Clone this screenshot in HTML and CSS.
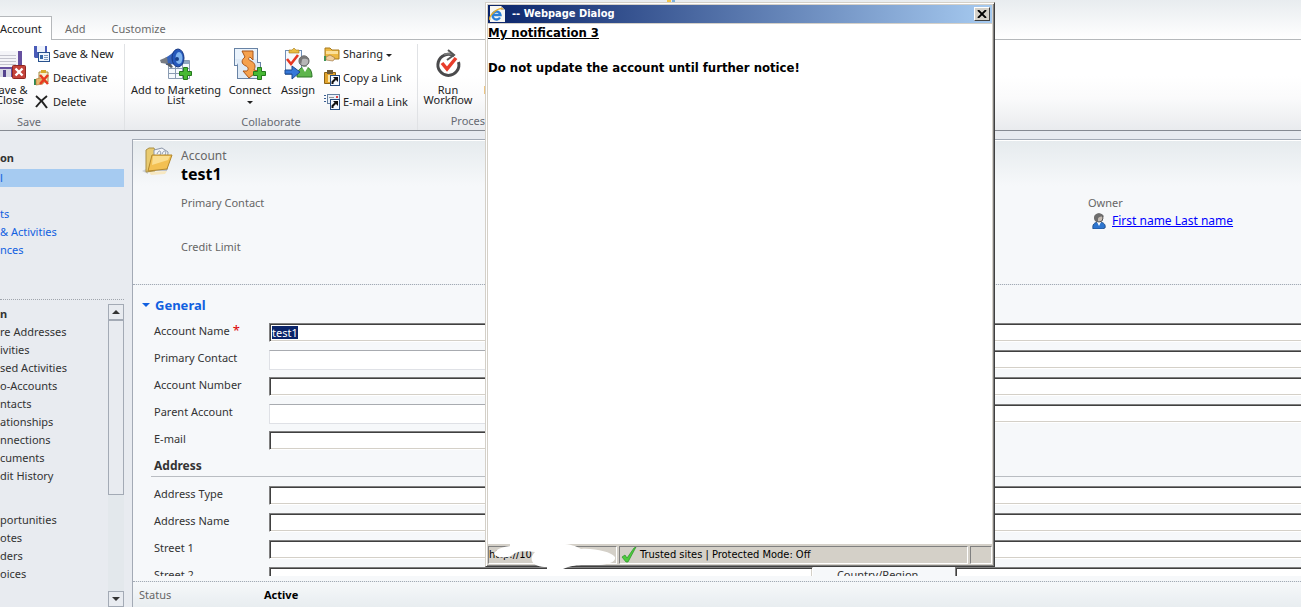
FILE: index.html
```html
<!DOCTYPE html>
<html lang="en">
<head>
  <meta charset="UTF-8">
  <title>Account: test1</title>
  <meta name="viewport" content="width=device-width,initial-scale=1.0">
  <link rel="stylesheet" href="styles.css">
</head>
<body>
  <header class="top">
    <svg class="logo" width="9" height="3"><path d="M0 0h4v3H0z" fill="#f3c64b"/><path d="M5 0h3v2H5z" fill="#7fb2dd"/></svg>
    <nav class="tabs">
      <a href="#" class="tab active">Account</a>
      <a href="#" class="tab">Add</a>
      <a href="#" class="tab">Customize</a>
    </nav>
  </header>

  <div class="ribbon">
    <div class="group save">
      <div class="tools">
        <button class="big">
          <svg width="32" height="32" viewBox="0 0 32 32">
            <path d="M0 3h28v26H0z" fill="#66509f"/>
            <path d="M3 3h21v16H3z" fill="#f4f4f8"/>
            <path d="M4 7.500h18M4 10.500h18M4 13.500h18M4 16.500h18" stroke="#c4c4ce"/>
            <path d="M5 21h12v8H5z" fill="#d8d8e4"/><path d="M9 22h3v7H9z" fill="#55438d"/>
            <rect x="18.500" y="17.500" width="13" height="13" rx="1" fill="#c5433b" stroke="#8f2722"/>
            <path d="M21.500 20.500l7 7M28.500 20.500l-7 7" stroke="#fff" stroke-width="2.400"/>
          </svg>
          <span>Save &amp; Close</span>
        </button>
        <div class="smalls">
          <button class="small">
            <svg width="16" height="16" viewBox="0 0 16 16">
              <path d="M0 0h13v12H1L0 11z" fill="#4a5cb8"/><path d="M3 0h8v6H3z" fill="#eef3fc"/>
              <rect x="4.500" y="6.500" width="11" height="9" fill="#eff6fd" stroke="#28518d"/>
              <path d="M6 9h3v4H6z" fill="#3566a5"/><path d="M10 9.500h4M10 11.500h4M10 13.500h4" stroke="#7f99bd"/>
            </svg>
            Save &amp; New
          </button>
          <button class="small">
            <svg width="16" height="16" viewBox="0 0 16 16">
              <path d="M5 2h9v10H5z" fill="#f7efcf" stroke="#a3893d"/><path d="M7 0h5v3H7z" fill="#d9a92b"/>
              <path d="M0 9h2v6H0z" fill="#2b8b55"/><path d="M2 9l4-1 4 2-1 4-7 1z" fill="#e9b56d" stroke="#a8722d" stroke-width=".6"/>
              <path d="M6 5l8 9M14 5l-8 9" stroke="#e83a20" stroke-width="2.600"/>
            </svg>
            Deactivate
          </button>
          <button class="small">
            <svg width="16" height="16" viewBox="0 0 16 16">
              <path d="M2 2c4 3 7 6 11 12" fill="none" stroke="#222" stroke-width="2"/><path d="M13 2C9 5 5 9 2 13" fill="none" stroke="#222" stroke-width="2"/>
            </svg>
            Delete
          </button>
        </div>
      </div>
      <div class="caption">Save</div>
    </div>

    <div class="group collaborate">
      <div class="tools">
        <button class="big wide">
          <svg width="32" height="32" viewBox="0 0 32 32">
            <path d="M8.500 12.500h21v18h-21z" fill="#f5f9fd" stroke="#8a9bb2"/>
            <path d="M9 13h20v3H9z" fill="#8fa5c2"/>
            <path d="M8 20.500h22M8 25.500h22M15.500 12v18M22.500 12v18" stroke="#8a9bb2"/>
            <path d="M5 10C9 8 13 5 16 1l5 17c-5-2-10-2-15-1z" fill="#3563bd"/>
            <path d="M0 12l7-3 1 7-7-1z" fill="#777b82"/><path d="M6 16l5 4 2-1-3-4z" fill="#555a62"/>
            <ellipse cx="18" cy="10" rx="6" ry="9" fill="#2457bb" stroke="#18387f"/>
            <ellipse cx="19" cy="10" rx="3.500" ry="6" fill="#80b4ef"/><circle cx="17" cy="11" r="2" fill="#183f8a"/>
            <path d="M23.500 19.500h4v4h4v4h-4v4h-4v-4h-4v-4h4z" fill="#48b934" stroke="#24781d"/>
          </svg>
          <span>Add to Marketing List</span>
        </button>
        <button class="big connect">
          <svg width="32" height="32" viewBox="0 0 32 32">
            <rect x=".5" y=".5" width="23" height="17" fill="#eaf3fc" stroke="#6883a5"/>
            <rect x="3.500" y="14.500" width="23" height="16" fill="#dfeaf6" stroke="#6883a5"/>
            <path d="M1 11h22v6H4z" fill="#dfeaf6"/>
            <path d="M8 3h11v9l-3-3c-2 1-2 3 1 4 4 2 5 5 3 9l4 1-9 7-6-7h4c2-2 1-4-1-5-5-2-5-6-1-9z" fill="#f5a14e" stroke="#a95518"/>
            <path d="M23.500 19.500h4v4h4v4h-4v4h-4v-4h-4v-4h4z" fill="#48b934" stroke="#24781d"/>
          </svg>
          <span>Connect</span>
          <i class="arrow"></i>
        </button>
        <button class="big assign">
          <svg width="32" height="32" viewBox="0 0 32 32">
            <rect x="3.500" y="2.500" width="16" height="24" fill="#f6f9fd" stroke="#6f8eb5"/>
            <path d="M7 2h3l2-2 2 2h3v3H7z" fill="#e9bd43" stroke="#a47a19" stroke-width=".6"/>
            <path d="M5 11l4 5 7-9" fill="none" stroke="#e63723" stroke-width="2.600"/>
            <path d="M15 29c0-6 3-10 8-10s7 4 7 10z" fill="#5eb54c" stroke="#2c7526"/><path d="M20 19l3 5 3-5z" fill="#fff"/>
            <circle cx="22" cy="13" r="5" fill="#b7b7b7" stroke="#555"/><path d="M17 12c1-6 9-6 10 0-3-1-6-2-7 0l-1 5z" fill="#777"/>
            <path d="M3 22h7v-4l8 6-8 7v-5H3z" fill="#3478d8" stroke="#1c498e"/>
          </svg>
          <span>Assign</span>
        </button>
        <div class="smalls">
          <button class="small">
            <svg width="16" height="16" viewBox="0 0 16 16">
              <path d="M1 2h5l2 2h7v9H1z" fill="#edb842" stroke="#a77b1f"/><path d="M2 5h12v3H2z" fill="#fbe09a"/>
              <path d="M0 10h2v5H0z" fill="#3a9556"/><path d="M2 11l4-2 5 3-2 3-7-1z" fill="#f0ce9c" stroke="#96703c" stroke-width=".6"/>
            </svg>
            Sharing <i class="arrow"></i>
          </button>
          <button class="small">
            <svg width="16" height="16" viewBox="0 0 16 16">
              <path d="M.5 2.500h11v11H.5z" fill="#e3a52e" stroke="#8b6316"/><path d="M3 0h6v4H3z" fill="#6c5a3a"/><path d="M4 5h6v7H4z" fill="#fbe6ab"/>
              <rect x="6.500" y="5.500" width="9" height="10" fill="#f4f9ff" stroke="#274d81"/>
              <path d="M8.500 14v-2l3-3" fill="none" stroke="#111" stroke-width="2"/><path d="M9 7h5v5z" fill="#111"/>
            </svg>
            Copy a Link
          </button>
          <button class="small">
            <svg width="16" height="16" viewBox="0 0 16 16">
              <path d="M0 1.500h2M0 4.500h2M0 7.500h2" stroke="#365d94"/>
              <rect x="3.500" y=".5" width="12" height="9" fill="#eaf1fa" stroke="#67809f"/><path d="M12 2h2v2h-2z" fill="#d44"/><path d="M5 3.500h5" stroke="#999"/>
              <rect x="6.500" y="5.500" width="9" height="10" fill="#f4f9ff" stroke="#274d81"/>
              <path d="M8.500 14v-2l3-3" fill="none" stroke="#111" stroke-width="2"/><path d="M9 7h5v5z" fill="#111"/>
            </svg>
            E-mail a Link
          </button>
        </div>
      </div>
      <div class="caption">Collaborate</div>
    </div>

    <div class="group process">
      <div class="tools">
        <button class="big workflow">
          <svg width="32" height="32" viewBox="0 0 32 32">
            <path d="M22 8A10.500 10.500 0 1 0 26.500 14" fill="none" stroke="#4a4a4c" stroke-width="3"/>
            <path d="M12 6.500c3-1 6-1 8 0" fill="none" stroke="#777" stroke-width="2"/><path d="M16 2l6 5-7 5" fill="none" stroke="#555" stroke-width="2"/>
            <path d="M10 15l5 6 9-11" fill="none" stroke="#e83d2b" stroke-width="3.500"/>
          </svg>
          <span>Run Workflow</span>
        </button>
        <button class="big">
          <svg width="32" height="32" viewBox="0 0 32 32"><path d="M0 4h24v22H0z" fill="#6a83a8"/><path d="M0 22h24v6H0z" fill="#66a255"/></svg>
          <span>Dialog</span>
        </button>
      </div>
      <div class="caption">Process</div>
    </div>
  </div>

  <div class="page">
    <aside class="sidebar">
      <div class="info">
        <h3>on</h3>
        <a href="#" class="current">l</a>
        <a href="#" class="after">ts</a>
        <a href="#">&amp; Activities</a>
        <a href="#">nces</a>
      </div>
      <div class="related">
        <div class="links">
          <h3>n</h3>
          <a href="#">re Addresses</a>
          <a href="#">ivities</a>
          <a href="#">sed Activities</a>
          <a href="#">o-Accounts</a>
          <a href="#">ntacts</a>
          <a href="#">ationships</a>
          <a href="#">nnections</a>
          <a href="#">cuments</a>
          <a href="#">dit History</a>
          <a href="#" class="section">portunities</a>
          <a href="#">otes</a>
          <a href="#">ders</a>
          <a href="#">oices</a>
        </div>
        <div class="scroll">
          <button class="up" aria-label="Scroll up"></button>
          <div class="thumb"></div>
          <button class="down" aria-label="Scroll down"></button>
        </div>
      </div>
    </aside>

    <main class="record">
      <div class="head">
        <svg width="32" height="32" viewBox="0 0 32 32">
          <path d="M0 24l6-3v6z" fill="#ccd0d6"/>
          <path d="M4 3l3-2h5l1 3v20l-9 1z" fill="#e9cb70" stroke="#a99048"/>
          <path d="M12 3l8-2 6 4-1 18H12z" fill="#f2f4f8" stroke="#8b96a8"/><path d="M15 7c2-5 5-3 3 1M20 7c2-5 5-3 3 1" fill="none" stroke="#8b96a8"/>
          <path d="M10 8l20 0-5 14-19 2z" fill="#f3c052" stroke="#b2882e"/><path d="M11 9l17 0-2 4-16 5z" fill="#fbdd8e"/>
          <path d="M7 25l18-1-2 3-14 1z" fill="#f7e8c2"/>
        </svg>
        <div class="title">
          <div class="kind">Account</div>
          <h1>test1</h1>
          <div class="facts">
            <div>Primary Contact</div>
            <div class="owner">
              Owner
              <div class="person">
                <svg width="16" height="16" viewBox="0 0 16 16">
                  <path d="M2 16c-1-4 1-7 6-7s7 3 6 6l-3 1z" fill="#2d75cf" stroke="#174580" stroke-width=".8"/><path d="M6 9l2 4 2-4z" fill="#fff"/>
                  <circle cx="8" cy="5" r="4" fill="#c5bcb4" stroke="#555"/><path d="M3 5c0-6 9-6 10-1-3-1-6 0-6 2v3C4 9 3 7 3 5z" fill="#6d6d6d"/>
                </svg>
                <a href="#">First name Last name</a>
              </div>
            </div>
            <div>Credit Limit</div>
          </div>
        </div>
      </div>

      <form class="form">
        <h2><i class="toggle"></i>General</h2>
        <div class="row"><label for="name">Account Name<b>*</b></label><span class="box"><mark>test1</mark><input id="name" type="text"></span><input class="second" type="text" aria-label="Main Phone"></div>
        <div class="row"><label for="contact">Primary Contact</label><input id="contact" class="lookup" type="text"><input class="second" type="text" aria-label="Other Phone"></div>
        <div class="row"><label for="number">Account Number</label><input id="number" type="text"><input class="second" type="text" aria-label="Fax"></div>
        <div class="row"><label for="parent">Parent Account</label><input id="parent" class="lookup" type="text"><input class="second" type="text" aria-label="Web Site"></div>
        <div class="row"><label for="email">E-mail</label><input id="email" type="text"></div>
        <h4>Address</h4>
        <div class="row"><label for="type">Address Type</label><input id="type" type="text"><input class="second" type="text" aria-label="City"></div>
        <div class="row"><label for="aname">Address Name</label><input id="aname" type="text"><input class="second" type="text" aria-label="State"></div>
        <div class="row"><label for="street1">Street 1</label><input id="street1" type="text"><input class="second" type="text" aria-label="ZIP"></div>
        <div class="row"><label for="street2">Street 2</label><input id="street2" type="text"><label class="right" for="country">Country/Region</label><input id="country" class="second" type="text"></div>
      </form>

      <footer class="status"><span>Status</span><b>Active</b></footer>
    </main>
  </div>

  <div class="dialog" role="dialog" aria-labelledby="dtitle">
    <div class="titlebar">
      <svg width="16" height="16" viewBox="0 0 16 16">
        <path d="M1 0h11l4 4v12H1z" fill="#f7f7f3"/><path d="M12 0v4h4z" fill="#b8b8b8"/>
        <path d="M11 11.500A4 4 0 1 1 11.500 9H4" fill="none" stroke="#2b80d8" stroke-width="2.300"/>
        <path d="M1 14C-1 10 9 1 14 3" fill="none" stroke="#e8ac25" stroke-width="1.300"/>
      </svg>
      <span id="dtitle">-- Webpage Dialog</span>
      <button aria-label="Close"><svg width="10" height="8" viewBox="0 0 10 8"><path d="M1 0l8 8M9 0L1 8" stroke="#000" stroke-width="1.800"/></svg></button>
    </div>
    <div class="message">
      <u>My notification 3</u>
      <p>Do not update the account until further notice!</p>
    </div>
    <div class="statusbar">
      <div class="url">http://10</div>
      <div class="zone">
        <svg width="16" height="16" viewBox="0 0 16 16"><path d="M1 10l3-2 2 3 7-10 2-1-8 15H5z" fill="#4dcb3d" stroke="#2a9226" stroke-width=".7"/></svg>
        Trusted sites | Protected Mode: Off
      </div>
      <div class="grip"></div>
    </div>
    <svg class="scribble" width="134" height="28" viewBox="0 0 134 28">
      <path d="M8 10C10 5 16 3 24 2V0h52c8 0 14 2 19 5 14-1 30 3 34 8 1 5-6 7-16 8H98c-8 0-12 1-16 2l-5 2-4 3H61v-5c-8 0-13-2-15-6-1-3 0-6 3-9-6-1-12-1-17 0-4 1-6 4-10 5-6 1-12 0-14-3z" fill="#fff"/>
    </svg>
  </div>
</body>
</html>
```
FILE: styles.css
```css
*{
  box-sizing: border-box;
  margin: 0;
  padding: 0;
}
body{
  display: flex;
  flex-direction: column;
  height: 100vh;
  overflow: hidden;
  position: relative;
  background: #e8ebf0;
  color: #333;
  font-family: "Noto Sans", "Open Sans", sans-serif;
  font-size: 11px;
  line-height: 18px;
}
a{
  color: inherit;
  text-decoration: none;
}
button{
  border: 0;
  background: none;
  color: #222;
  font: inherit;
}
svg{
  display: block;
  flex: none;
}

/* tabs */
.top{
  flex: none;
  height: 40px;
  padding-top: 16px;
  background: linear-gradient(#e8ecef, #fff);
  border-bottom: 1px solid #b5b8bb;
}
.logo{
  position: absolute;
  top: 0;
  left: 667px;
}
.tabs{
  display: flex;
}
.tab{
  height: 23px;
  padding: 4px 13px;
  color: #6a6a6a;
}
.tab.active{
  width: 52px;
  height: 24px;
  padding: 3px 0;
  background: #fff;
  color: #222;
  border: 1px solid #b5b8bb;
  border-width: 1px 1px 0 0;
}

/* ribbon */
.ribbon{
  display: flex;
  flex: none;
  height: 91px;
  background: linear-gradient(#fff 40%, #fafafb 65%, #e9ebee);
  border-bottom: 1px solid #868a92;
}
.group{
  display: flex;
  flex-direction: column;
  flex: none;
  margin-top: 4px;
  border-right: 1px solid #e0e2e5;
}
.save{
  width: 191px;
  margin-left: -66px;
}
.save .tools{
  padding-left: 52px;
}
.collaborate{
  width: 293px;
}
.collaborate .tools{
  padding-left: 3px;
}
.process{
  width: 106px;
}
.tools{
  display: flex;
  height: 69px;
}
.caption{
  color: #666a72;
  text-align: center;
}
.big{
  display: flex;
  flex-direction: column;
  align-items: center;
  width: 48px;
  padding-top: 4px;
  line-height: 10px;
}
.big span{
  margin-top: 5px;
}
.big.wide{
  width: 96px;
}
.big.connect{
  width: 52px;
}
.big.assign{
  width: 44px;
}
.big.workflow{
  width: 64px;
}
.arrow{
  display: inline-block;
  border: 3px solid transparent;
  border-top-color: #222;
  border-bottom: 0;
}
.big .arrow{
  margin-top: 6px;
}
.small .arrow{
  margin-top: 3px;
}
.small{
  display: flex;
  align-items: center;
  height: 24px;
  gap: 3px;
  white-space: nowrap;
}
.smalls{
  margin-top: -2px;
}
.collaborate .smalls{
  margin-left: 4px;
}

.page{
  display: flex;
  flex: 1;
  min-height: 0;
  padding-top: 8px;
}

/* left navigation */
.sidebar{
  display: flex;
  flex: none;
  flex-direction: column;
  width: 132px;
  padding-right: 8px;
}
.sidebar a,
.sidebar h3{
  display: block;
  height: 18px;
  font-size: 11px;
  white-space: nowrap;
}
.info{
  height: 161px;
  padding-top: 10px;
  border-bottom: 1px dotted #a0a5ad;
  color: #1160e0;
}
.info h3{
  height: 20px;
  color: #333;
}
.info .current{
  background: #a6cbf1;
}
.info .after{
  margin-top: 18px;
}
.related{
  display: flex;
  flex: 1;
  justify-content: space-between;
  min-height: 0;
  padding-top: 4px;
}
.related h3{
  margin-top: 1px;
}
.related .section{
  margin-top: 26px;
}
.scroll{
  display: flex;
  flex-direction: column;
  width: 16px;
  background: #e3e8ec;
}
.scroll button,
.thumb{
  background: #e8ebf0;
  border: 1px solid #a3aab5;
}
.scroll button{
  display: flex;
  align-items: center;
  justify-content: center;
  height: 16px;
}
.scroll button::before{
  content: "";
  border: 4px solid transparent;
}
.scroll .up::before{
  border-bottom-color: #333;
  border-top: 0;
}
.scroll .down::before{
  border-top-color: #333;
  border-bottom: 0;
}
.thumb{
  height: 175px;
}
.scroll .down{
  margin-top: auto;
}

/* record */
.record{
  display: flex;
  flex: 1;
  flex-direction: column;
  min-width: 0;
  background: #f6f8fa;
  border: 1px solid #a3aab5;
  border-width: 1px 0 0 1px;
}
.head{
  display: flex;
  flex: none;
  gap: 7px;
  height: 145px;
  padding: 6px 0 0 9px;
  background: linear-gradient(#e6ebee, #f6f8fa 45px);
  border-top: 1px solid #fff;
  border-bottom: 1px dotted #a3aab5;
  color: #666;
}
.title{
  flex: 1;
}
.kind{
  font-size: 12px;
}
.head h1{
  color: #000;
  font-size: 16px;
  line-height: 18px;
}
.facts{
  display: grid;
  grid-template-columns: 1fr 213px;
  grid-template-rows: 44px 18px;
  margin-top: 11px;
}
.person{
  display: flex;
  align-items: center;
  gap: 5px;
  height: 18px;
  padding-left: 3px;
  font-size: 12px;
}
.person a{
  color: #00f;
  text-decoration: underline;
}

.form{
  flex: 1;
  min-height: 0;
  margin-bottom: 5px;
  padding-left: 18px;
  overflow: hidden;
}
.form h2{
  display: flex;
  align-items: center;
  gap: 5px;
  height: 34px;
  margin-left: -9px;
  padding-bottom: 6px;
  padding-top: 12px;
  color: #1160e0;
  font-size: 13px;
}
.toggle{
  border: 4px solid transparent;
  border-top-color: #1160e0;
  border-bottom: 0;
}
.form h4{
  height: 23px;
  margin-bottom: 5px;
  padding-left: 3px;
  border-bottom: 1px solid #b9bdc2;
  font-size: 12px;
  line-height: 24px;
}
.row{
  display: grid;
  grid-template-columns: 115px 11fr 142px 7fr;
  align-items: center;
  height: 27px;
  padding-left: 3px;
}
.row label{
  height: 22px;
}
.row label b{
  margin-left: 3px;
  color: #d00;
  font-size: 13px;
  font-weight: normal;
  line-height: 16px;
}
.row .right{
  padding-left: 24px;
}
.row input,
.box{
  width: 100%;
  height: 19px;
  background: #fff;
  border: 1px solid;
  border-color: #808080 #fff #fff #808080;
  box-shadow: inset 1px 1px #404040, inset -1px -1px #d4d0c8;
}
.row .second{
  grid-column: 4;
  border-right: 0;
  box-shadow: inset 1px 1px #404040, inset 0 -1px #d4d0c8;
}
.row .lookup{
  height: 20px;
  border-color: #a8abb0 #dfe1e6 #dfe1e6;
  box-shadow: none;
}
.box{
  display: flex;
  padding: 2px;
}
.box mark{
  background: #0a246a;
  color: #fff;
  line-height: 14px;
}
.row .box input{
  flex: 1;
  height: 13px;
  border: 0;
  box-shadow: none;
}
.status{
  display: flex;
  flex: none;
  height: 26px;
  padding: 4px 6px;
  border-top: 1px dotted #a3aab5;
  background: linear-gradient(#f6f8fa, #e8edf0);
  color: #666;
}
.status span{
  width: 125px;
}
.status b{
  color: #000;
}

/* modal window */
.dialog{
  display: flex;
  flex-direction: column;
  position: absolute;
  top: 2px;
  left: 485px;
  width: 510px;
  height: 565px;
  padding: 2px;
  background: #d4d0c8;
  border: 1px solid;
  border-color: #d4d0c8 #404040 #404040 #d4d0c8;
  box-shadow: inset 1px 1px #fff, inset -1px -1px #808080;
  color: #000;
  font-family: "DejaVu Sans Condensed", "DejaVu Sans", sans-serif;
}
.titlebar{
  display: flex;
  align-items: center;
  gap: 7px;
  height: 18px;
  padding: 0 2px 0 1px;
  background: linear-gradient(90deg, #0a246a, #a6caf0);
  color: #fff;
  font-weight: bold;
}
.titlebar button{
  display: flex;
  align-items: center;
  justify-content: center;
  width: 16px;
  height: 14px;
  margin-left: auto;
  background: #d4d0c8;
  border: 1px solid;
  border-color: #fff #404040 #404040 #fff;
}
.message{
  flex: 1;
  margin-top: 1px;
  background: #fff;
  font-size: 13px;
  font-weight: bold;
}
.message p{
  margin-top: 17px;
}
.statusbar{
  display: flex;
  gap: 2px;
  height: 20px;
  padding-top: 2px;
}
.statusbar div{
  display: flex;
  align-items: center;
  gap: 4px;
  height: 18px;
  border: 1px solid;
  border-color: #808080 #fff #fff #808080;
  white-space: nowrap;
}
.url{
  width: 129px;
}
.statusbar .zone{
  flex: 1;
  gap: 3px;
  padding-left: 1px;
}
.grip{
  width: 22px;
}
/* hides the server address */
.scribble{
  position: absolute;
  top: 541px;
  left: 0;
}
```
